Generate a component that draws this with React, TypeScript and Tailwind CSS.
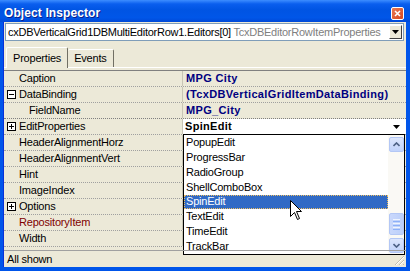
import React from "react";

type Row = { name: string; box?: "+" | "-"; indent?: number; value?: string; red?: boolean; editor?: boolean };

const rows: Row[] = [
  { name: "Caption", value: "MPG City" },
  { name: "DataBinding", box: "-", value: "(TcxDBVerticalGridItemDataBinding)" },
  { name: "FieldName", indent: 1, value: "MPG_City" },
  { name: "EditProperties", box: "+", editor: true },
  { name: "HeaderAlignmentHorz" },
  { name: "HeaderAlignmentVert" },
  { name: "Hint" },
  { name: "ImageIndex" },
  { name: "Options", box: "+" },
  { name: "RepositoryItem", red: true },
  { name: "Width" },
];

const items = ["PopupEdit", "ProgressBar", "RadioGroup", "ShellComboBox", "SpinEdit", "TextEdit", "TimeEdit", "TrackBar"];

function Box({ kind }: { kind: "+" | "-" }) {
  return (
    <svg width="9" height="9" viewBox="0 0 9 9" className="block">
      <rect x="0.5" y="0.5" width="8" height="8" fill="white" stroke="#000" />
      <line x1="2" y1="4.5" x2="7" y2="4.5" stroke="#000" />
      {kind === "+" && <line x1="4.5" y1="2" x2="4.5" y2="7" stroke="#000" />}
    </svg>
  );
}

function DownArrow() {
  return (
    <svg width="7" height="4" viewBox="0 0 7 4" className="block">
      <path d="M0 0H7L3.5 4Z" fill="#000" />
    </svg>
  );
}

function ScrollBtn({ up }: { up: boolean }) {
  return (
    <div className="h-[15px] w-[15px] rounded-[2px] border border-[#B3C7F5] bg-[linear-gradient(to_bottom,#DCE6FD,#C1D3FB)] flex items-center justify-center">
      <svg width="7" height="5" viewBox="0 0 7 5">
        <path d={up ? "M0.5 4L3.5 1L6.5 4" : "M0.5 1L3.5 4L6.5 1"} fill="none" stroke="#4D6185" strokeWidth="1.6" />
      </svg>
    </div>
  );
}

export default function App() {
  return (
    <div className="relative w-[410px] h-[271px] overflow-hidden bg-[#0055EA] flex flex-col font-['Liberation_Sans',Arial,sans-serif] text-[11px] tracking-[-0.2px] leading-none text-black select-none">
      {/* title bar */}
      <div className="h-[22px] shrink-0 flex items-center justify-between pl-[4px] pr-[6px] bg-[linear-gradient(to_bottom,#3D8DFF_0%,#0A5EEE_18%,#0054E3_45%,#0056E8_80%,#0049D8_100%)]">
        <span className="text-white font-bold text-[12px] tracking-[0.1px] [text-shadow:1px_1px_0_#0A1E8C] mt-[3px]">Object Inspector</span>
        <div className="mt-[4px] w-[13px] h-[13px] rounded-[2px] border border-white bg-[linear-gradient(135deg,#E77A55,#D8461C)] flex items-center justify-center">
          <svg width="7" height="7" viewBox="0 0 7 7">
            <path d="M1 1L6 6M6 1L1 6" stroke="white" strokeWidth="1.6" />
          </svg>
        </div>
      </div>

      {/* body */}
      <div className="flex-1 ml-[3px] mr-[4px] mb-[4px] bg-[#ECE9D8] flex flex-col border-l border-[#0831D9]">
        {/* combo */}
        <div className="mt-[1px] ml-[1px] mr-[2px] h-[18px] border border-[#7F9DB9] bg-white flex items-center">
          <div className="flex-1 pl-[2px] whitespace-nowrap overflow-hidden tracking-[-0.25px]">
            <span>cxDBVerticalGrid1DBMultiEditorRow1.Editors[0]</span>
            <span className="text-[#808080]"> TcxDBEditorRowItemProperties</span>
          </div>
          <div className="w-[13px] h-[14px] mr-[1px] bg-[#ECE9D8] border border-t-white border-l-white border-r-[#404040] border-b-[#404040] flex items-center justify-center">
            <DownArrow />
          </div>
        </div>

        {/* tabs */}
        <div className="h-[24px] flex items-end pl-[2px] mt-[2px]">
          <div className="h-[21px] px-[6px] bg-[#ECE9D8] border-t border-l border-white border-r border-r-[#716F64] rounded-t-[2px] flex items-center relative top-[1px]">
            Properties
          </div>
          <div className="h-[18px] px-[6px] bg-[#ECE9D8] border-t border-white border-r border-r-[#716F64] rounded-t-[2px] flex items-center">
            Events
          </div>
        </div>
        <div className="h-[3px] border-t border-white" />

        {/* grid */}
        <div className="relative border-t border-[#808080]">
          {rows.map((r) => (
            <div
              key={r.name}
              className={
                "h-[16px] flex border-b border-dotted border-[#A0A0A0] " +
                (r.editor ? "border-t border-t-[#808080] -mt-[1px] h-[17px]" : "")
              }
            >
              <div className="w-[179px] shrink-0 flex items-center border-r border-[#C8C5B5]">
                <div className="w-[15px] pl-[3px] flex items-center">{r.box && <Box kind={r.box} />}</div>
                <span className={(r.indent ? "pl-[10px] " : "") + (r.red ? "text-[#800000]" : "")}>{r.name}</span>
              </div>
              {r.editor ? (
                <div className="flex-1 bg-white flex items-center justify-between pl-[2px] pr-[6px]">
                  <span className="font-bold tracking-[0.3px]">SpinEdit</span>
                  <DownArrow />
                </div>
              ) : (
                <div className="flex-1 flex items-center pl-[3px] font-bold tracking-[0.35px] text-[#000080] whitespace-nowrap overflow-hidden">
                  {r.value}
                </div>
              )}
            </div>
          ))}

          {/* dropdown list */}
          <div className="absolute left-[179px] top-[63px] w-[222px] h-[121px] bg-white border border-black flex">
            <div className="flex-1 flex flex-col">
              {items.map((it) => (
                <div
                  key={it}
                  className={
                    "h-[15px] flex items-center pl-[2px] " +
                    (it === "SpinEdit" ? "bg-[#316AC5] text-white outline-1 outline-dotted outline-[#F0C060] -outline-offset-1" : "")
                  }
                >
                  {it}
                </div>
              ))}
            </div>
            <div className="w-[16px] bg-[#FAF9F5] flex flex-col items-center pt-[2px] pb-[1px]">
              <ScrollBtn up />
              <div className="flex-1 w-full flex flex-col justify-end items-center pb-[3px]">
                <div className="h-[22px] w-[15px] rounded-[2px] border border-[#B3C7F5] bg-[linear-gradient(to_right,#C9D8FC,#BCCFF9)] flex flex-col items-center justify-center gap-[1px]">
                  <div className="h-[1px] w-[7px] bg-[#EEF4FE]" />
                  <div className="h-[1px] w-[7px] bg-[#8CB0F8]" />
                  <div className="h-[1px] w-[7px] bg-[#EEF4FE]" />
                  <div className="h-[1px] w-[7px] bg-[#8CB0F8]" />
                  <div className="h-[1px] w-[7px] bg-[#EEF4FE]" />
                  <div className="h-[1px] w-[7px] bg-[#8CB0F8]" />
                </div>
              </div>
              <ScrollBtn up={false} />
            </div>
          </div>
        </div>

        <div className="flex-1" />

        {/* status bar */}
        <div className="h-[17px] border-t border-[#A0A0A0] flex items-center pl-[3px] relative">
          All shown
          <svg width="11" height="11" viewBox="0 0 11 11" className="absolute right-[1px] bottom-[1px]">
            <path d="M10 1L1 10M10 5L5 10M10 9L9 10" stroke="#C0BDAE" strokeWidth="1" />
            <path d="M10 2L2 10M10 6L6 10" stroke="#FFFFFF" strokeWidth="1" />
          </svg>
        </div>
      </div>

      {/* mouse cursor */}
      <svg width="13" height="21" viewBox="0 0 13 21" className="absolute left-[290px] top-[200px]">
        <path d="M0.5 0.5V16.5L4.5 12.5L7.5 19.5L9.5 18.5L6.5 11.5H11.5Z" fill="white" stroke="black" strokeWidth="1" strokeLinejoin="miter" />
      </svg>
    </div>
  );
}
